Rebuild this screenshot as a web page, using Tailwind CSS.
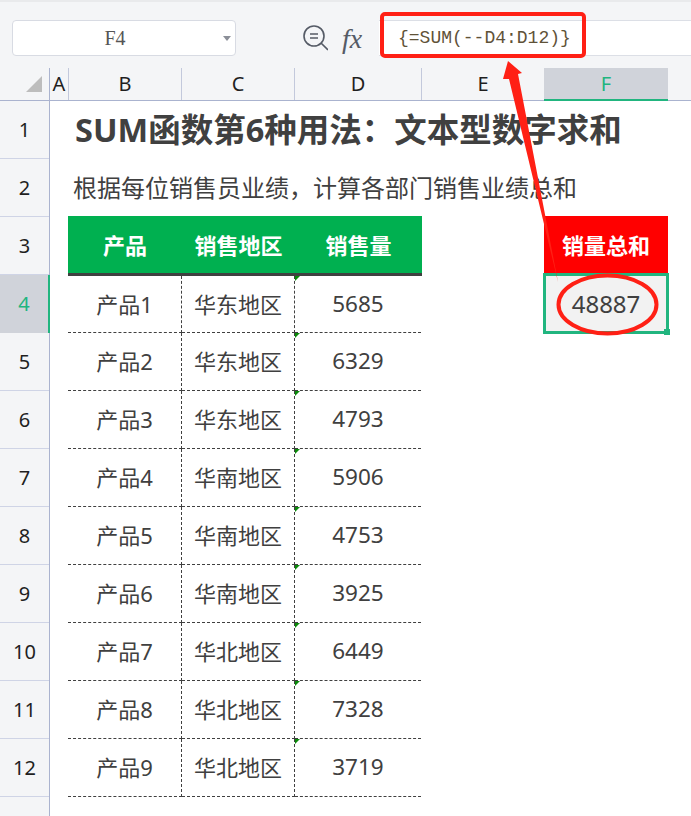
<!DOCTYPE html>
<html lang="zh-CN">
<head>
<meta charset="UTF-8">
<title>SUM</title>
<script src="https://cdn.jsdelivr.net/npm/@tailwindcss/browser@4"></script>
</head>
<body class="bg-white font-['Noto_Sans','Noto_Sans_CJK_SC',sans-serif] text-[#404040]">
<div class="relative w-[691px] h-[816px] overflow-hidden">

  <!-- toolbar -->
  <div class="h-[68px] bg-[#f4f5f7] border-t-2 border-[#e9eaec] flex items-start pt-[18px]">
    <div class="ml-[12px] w-[224px] h-[36px] bg-white border border-[#d8dbe3] rounded flex items-center justify-center pr-[18px] relative font-['Liberation_Serif',serif] text-[20px] text-[#555]">
      F4
      <span class="absolute right-[4px] top-[15px] w-0 h-0 border-x-[4px] border-x-transparent border-t-[5px] border-t-[#8b8f98]"></span>
    </div>
    <svg class="ml-[66px] mt-[5px]" width="26" height="26" viewBox="0 0 26 26" fill="none" stroke="#555b66" stroke-width="1.6">
      <circle cx="12" cy="11" r="10"/>
      <path d="M19 18l7 7M8 9h8M8 13h8"/>
    </svg>
    <span class="ml-[14px] w-[37px] mt-[2px] font-['Liberation_Serif',serif] italic text-[28px] leading-[34px] text-[#555b66]">fx</span>
    <div class="flex-1 h-[36px] bg-white border-y border-[#dcdfe6] flex items-center pl-[19px] font-['Liberation_Mono',monospace] text-[#5f5238] text-[18px]">{=SUM(--D4:D12)}</div>
  </div>

  <!-- column header -->
  <div class="h-[33px] flex bg-[#f4f5f7] border-b border-[#aab3cf] text-[20px] leading-[32px] text-[#1f1f1f] text-center">
    <div class="w-[50px] border-r border-[#aab3cf] relative">
      <span class="absolute left-[26px] top-[8px] w-0 h-0 border-l-[16px] border-l-transparent border-b-[16px] border-b-[#bdbdbd]"></span>
    </div>
    <div class="w-[19px] border-r border-[#c3c9dc]">A</div>
    <div class="w-[113px] border-r border-[#c3c9dc]">B</div>
    <div class="w-[113px] border-r border-[#c3c9dc]">C</div>
    <div class="w-[127px] border-r border-[#c3c9dc]">D</div>
    <div class="w-[122px]">E</div>
    <div class="w-[124px] h-[33px] bg-[#d0d3da] border-b-2 border-[#21b57f] text-[#21b57f]">F</div>
    <div class="flex-1"></div>
  </div>

  <div class="flex">
    <!-- row header -->
    <div class="w-[50px] shrink-0 bg-[#f4f5f7] border-r border-[#aab3cf] text-[20px] text-[#1f1f1f] text-center">
      <div class="h-[58px] leading-[58px] border-b border-[#cfd4e6]">1</div>
      <div class="h-[58px] leading-[58px] border-b border-[#cfd4e6]">2</div>
      <div class="h-[58px] leading-[58px] border-b border-[#cfd4e6]">3</div>
      <div class="h-[58px] leading-[58px] bg-[#d0d3da] text-[#21b57f] border-r-2 border-[#21b57f] -mr-px">4</div>
      <div class="h-[58px] leading-[58px] border-b border-[#cfd4e6]">5</div>
      <div class="h-[58px] leading-[58px] border-b border-[#cfd4e6]">6</div>
      <div class="h-[58px] leading-[58px] border-b border-[#cfd4e6]">7</div>
      <div class="h-[58px] leading-[58px] border-b border-[#cfd4e6]">8</div>
      <div class="h-[58px] leading-[58px] border-b border-[#cfd4e6]">9</div>
      <div class="h-[58px] leading-[58px] border-b border-[#cfd4e6]">10</div>
      <div class="h-[58px] leading-[58px] border-b border-[#cfd4e6]">11</div>
      <div class="h-[58px] leading-[58px] border-b border-[#cfd4e6]">12</div>
      <div class="h-[30px]"></div>
    </div>

    <!-- sheet -->
    <div class="flex-1">
      <div class="h-[57px] pl-[25px] font-bold text-[32.5px] leading-[58px] whitespace-nowrap">SUM函数第6种用法：文本型数字求和</div>
      <div class="h-[58px] pl-[23px] text-[24px] leading-[60px] whitespace-nowrap">根据每位销售员业绩，计算各部门销售业绩总和</div>

      <div class="flex">
        <div class="ml-[18px] w-[354px]">
          <!-- table head -->
          <div class="h-[60px] bg-[#00b050] border-b-[3px] border-[#404040] grid grid-cols-[114px_113px_127px] text-center text-white font-bold text-[22px] leading-[58px]">
            <div>产品</div><div>销售地区</div><div>销售量</div>
          </div>
          <!-- table body -->
          <div class="grid grid-cols-[114px_113px_126px] grid-rows-[57px] auto-rows-[58px] text-center text-[22px] leading-[56px] w-[353px]">
            <div class="border-b border-r border-dashed border-[#404040]">产品1</div><div class="border-b border-r border-dashed border-[#404040]">华东地区</div><div class="relative border-b border-dashed border-[#404040] text-[22.5px]"><i class="absolute left-0 top-0 border-t-[5px] border-r-[5px] border-t-[#0a8a0a] border-r-transparent"></i>5685</div>
            <div class="border-b border-r border-dashed border-[#404040]">产品2</div><div class="border-b border-r border-dashed border-[#404040]">华东地区</div><div class="relative border-b border-dashed border-[#404040] text-[22.5px]"><i class="absolute left-0 top-0 border-t-[5px] border-r-[5px] border-t-[#0a8a0a] border-r-transparent"></i>6329</div>
            <div class="border-b border-r border-dashed border-[#404040]">产品3</div><div class="border-b border-r border-dashed border-[#404040]">华东地区</div><div class="relative border-b border-dashed border-[#404040] text-[22.5px]"><i class="absolute left-0 top-0 border-t-[5px] border-r-[5px] border-t-[#0a8a0a] border-r-transparent"></i>4793</div>
            <div class="border-b border-r border-dashed border-[#404040]">产品4</div><div class="border-b border-r border-dashed border-[#404040]">华南地区</div><div class="relative border-b border-dashed border-[#404040] text-[22.5px]"><i class="absolute left-0 top-0 border-t-[5px] border-r-[5px] border-t-[#0a8a0a] border-r-transparent"></i>5906</div>
            <div class="border-b border-r border-dashed border-[#404040]">产品5</div><div class="border-b border-r border-dashed border-[#404040]">华南地区</div><div class="relative border-b border-dashed border-[#404040] text-[22.5px]"><i class="absolute left-0 top-0 border-t-[5px] border-r-[5px] border-t-[#0a8a0a] border-r-transparent"></i>4753</div>
            <div class="border-b border-r border-dashed border-[#404040]">产品6</div><div class="border-b border-r border-dashed border-[#404040]">华南地区</div><div class="relative border-b border-dashed border-[#404040] text-[22.5px]"><i class="absolute left-0 top-0 border-t-[5px] border-r-[5px] border-t-[#0a8a0a] border-r-transparent"></i>3925</div>
            <div class="border-b border-r border-dashed border-[#404040]">产品7</div><div class="border-b border-r border-dashed border-[#404040]">华北地区</div><div class="relative border-b border-dashed border-[#404040] text-[22.5px]"><i class="absolute left-0 top-0 border-t-[5px] border-r-[5px] border-t-[#0a8a0a] border-r-transparent"></i>6449</div>
            <div class="border-b border-r border-dashed border-[#404040]">产品8</div><div class="border-b border-r border-dashed border-[#404040]">华北地区</div><div class="relative border-b border-dashed border-[#404040] text-[22.5px]"><i class="absolute left-0 top-0 border-t-[5px] border-r-[5px] border-t-[#0a8a0a] border-r-transparent"></i>7328</div>
            <div class="border-b border-r border-dashed border-[#404040]">产品9</div><div class="border-b border-r border-dashed border-[#404040]">华北地区</div><div class="relative border-b border-dashed border-[#404040] text-[22.5px]"><i class="absolute left-0 top-0 border-t-[5px] border-r-[5px] border-t-[#0a8a0a] border-r-transparent"></i>3719</div>
          </div>
        </div>

        <!-- total column -->
        <div class="ml-[122px] w-[124px]">
          <div class="h-[57px] bg-[#ff0000] text-white font-bold text-[22px] leading-[58px] text-center">销量总和</div>
          <div class="relative -ml-px w-[126px] h-[61px] bg-[#f2f2f2] border-[3px] border-[#21b57f] text-[24px] leading-[55px] text-center">48887
            <span class="absolute -right-[4px] -bottom-[4px] w-[6px] h-[6px] bg-[#21b57f]"></span>
          </div>
        </div>
      </div>
    </div>
  </div>

  <!-- annotations drawn over the sheet -->
  <div class="absolute left-[380px] top-[12px] w-[206px] h-[46px] border-[4px] border-[#ff2015] rounded-[5px]"></div>
  <svg class="absolute left-0 top-0" width="691" height="816" fill="none">
    <path d="M508 61L522 73L518 74L558 282L509 79L503 79Z" fill="#ff2015"/>
    <ellipse cx="607.500" cy="304.500" rx="49" ry="29" stroke="#ff2015" stroke-width="4"/>
  </svg>
</div>
</body>
</html>
